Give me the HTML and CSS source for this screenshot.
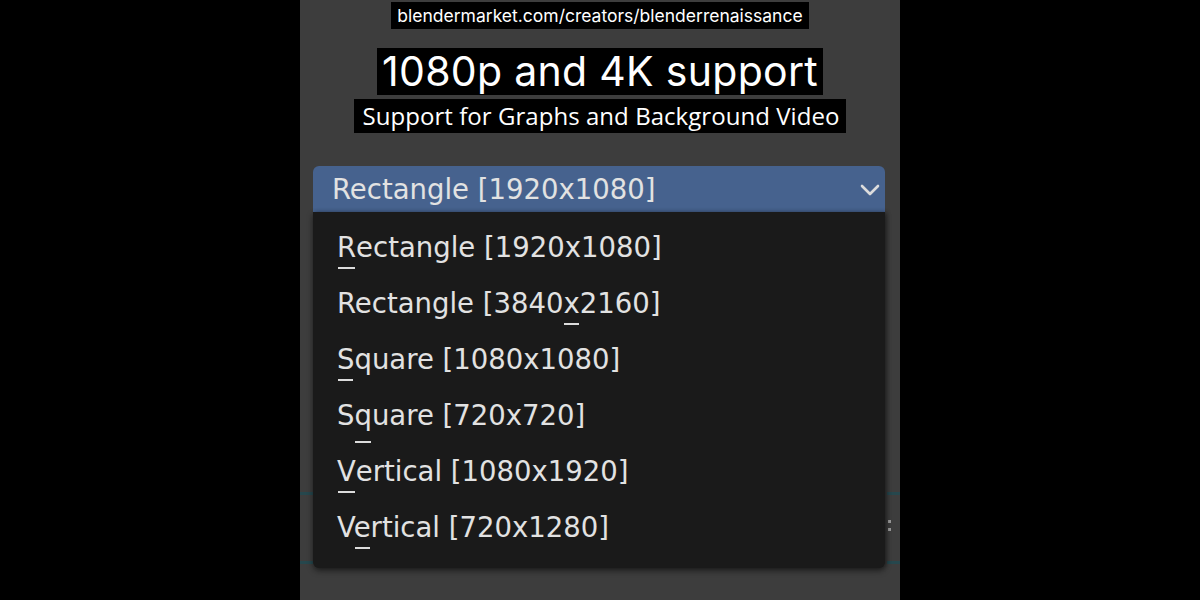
FILE: index.html
```html
<!DOCTYPE html>
<html>
<head>
<meta charset="utf-8">
<link rel="stylesheet" href="styles.css">
</head>
<body>
<div class="panel">
  <div class="deco deco-l1"></div>
  <div class="deco deco-l2"></div>
  <div class="deco deco-r1"></div>
  <div class="deco deco-r2"></div>
  <div class="deco-dots"><span></span><span></span></div>

  <div class="url">blendermarket.com/creators/blenderrenaissance</div>
  <div class="title">1080p and 4K support</div>
  <div class="subtitle">Support for Graphs and Background Video</div>

  <div class="select">
    <div class="select-head">
      <span class="select-value">Rectangle [1920x1080]</span>
      <svg class="chev" width="20" height="12" viewBox="0 0 20 12"><path d="M2 2 L10 10 L18 2" fill="none" stroke="#dcdcdc" stroke-width="2.6" stroke-linecap="round" stroke-linejoin="round"/></svg>
    </div>
    <ul class="menu">
      <li><span class="mn">R</span>ectangle [1920x1080]</li>
      <li>Rectangle [3840<span class="mn">x</span>2160]</li>
      <li><span class="mn">S</span>quare [1080x1080]</li>
      <li>S<span class="mn low">q</span>uare [720x720]</li>
      <li><span class="mn">V</span>ertical [1080x1920]</li>
      <li>V<span class="mn">e</span>rtical [720x1280]</li>
    </ul>
  </div>
</div>
</body>
</html>
```

FILE: styles.css
```css
html, body {
  margin: 0;
  padding: 0;
  background: #000;
}
body {
  width: 1200px;
  height: 600px;
  overflow: hidden;
}
.panel {
  position: relative;
  width: 600px;
  height: 600px;
  margin: 0 auto;
  background: #3d3d3d;
  display: flex;
  flex-direction: column;
  align-items: center;
}
.url {
  margin-top: 2px;
  background: #000;
  color: #fff;
  font-family: Inter, "Open Sans", sans-serif;
  font-size: 17.5px;
  line-height: 27px;
  height: 27px;
  padding: 0 6px;
}
.title {
  margin-top: 19px;
  background: #000;
  color: #fff;
  font-family: Inter, "Open Sans", sans-serif;
  font-size: 41px;
  line-height: 47px;
  height: 47px;
  padding: 0 5px;
  letter-spacing: 0.3px;
}
.subtitle {
  margin-top: 4px;
  background: #000;
  color: #fff;
  font-family: "Open Sans", sans-serif;
  font-size: 24px;
  line-height: 34px;
  height: 34px;
  padding: 0 7px 0 9px;
  letter-spacing: 0.05px;
}
.select {
  align-self: flex-start;
  margin-left: 13px;
  margin-top: 33px;
  width: 572px;
  font-family: "DejaVu Sans", sans-serif;
  font-size: 27.5px;
  color: #e2e2e2;
  position: relative;
  z-index: 1;
}
.select-head {
  height: 46px;
  line-height: 45px;
  background: #46628e;
  border-radius: 6px 6px 0 0;
  padding-left: 19px;
  padding-right: 5px;
  display: flex;
  align-items: center;
  justify-content: space-between;
}
.chev {
  margin-top: 2px;
}
.menu {
  list-style: none;
  margin: 0;
  padding: 7px 0 13px 24px;
  background: #1a1a1a;
  border-radius: 0 0 6px 6px;
  box-shadow: 0 3px 6px rgba(0, 0, 0, 0.45), 2px 0 4px rgba(0, 0, 0, 0.3);
}
.menu li {
  height: 56px;
  line-height: 56px;
  white-space: nowrap;
}
.mn {
  position: relative;
}
.mn::after {
  content: "";
  position: absolute;
  left: 1px;
  right: 1px;
  top: 36px;
  height: 2px;
  background: #dcdcdc;
}
.mn.low::after {
  top: 42px;
}
.deco {
  position: absolute;
  height: 3px;
  background: #26474d;
}
.deco-l1 { left: 0; width: 13px; top: 492px; }
.deco-l2 { left: 0; width: 13px; top: 561px; }
.deco-r1 { right: 0; width: 13px; top: 492px; }
.deco-r2 { right: 0; width: 13px; top: 561px; }
.deco-dots {
  position: absolute;
  left: 588px;
  top: 520px;
  display: flex;
  flex-direction: column;
  gap: 5px;
}
.deco-dots span {
  width: 3px;
  height: 3px;
  background: #9a9a9a;
}
```
